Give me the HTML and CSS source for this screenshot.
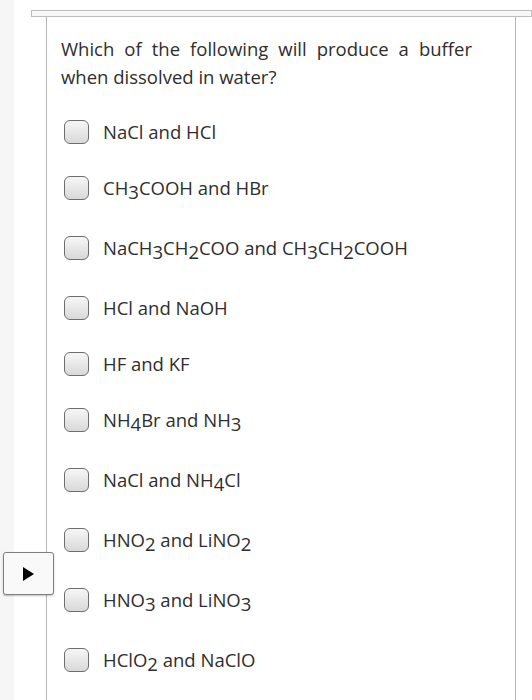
FILE: index.html
```html
<!DOCTYPE html>
<html lang="en">
<head>
<meta charset="utf-8">
<title>Buffer question</title>
<link rel="stylesheet" href="styles.css">
</head>
<body>
<div class="page">
  <aside class="rail"></aside>
  <main class="content">
    <div class="topbar"></div>
    <section class="panel">
      <p class="question">Which of the following will produce a buffer when dissolved in water?</p>
      <ul class="options">
        <li class="option"><input type="checkbox" class="box"><span class="label">NaCl and HCl</span></li>
        <li class="option"><input type="checkbox" class="box"><span class="label">CH<span class="sub">3</span>COOH and HBr</span></li>
        <li class="option"><input type="checkbox" class="box"><span class="label">NaCH<span class="sub">3</span>CH<span class="sub">2</span>COO and CH<span class="sub">3</span>CH<span class="sub">2</span>COOH</span></li>
        <li class="option"><input type="checkbox" class="box"><span class="label">HCl and NaOH</span></li>
        <li class="option"><input type="checkbox" class="box"><span class="label">HF and KF</span></li>
        <li class="option"><input type="checkbox" class="box"><span class="label">NH<span class="sub">4</span>Br and NH<span class="sub">3</span></span></li>
        <li class="option"><input type="checkbox" class="box"><span class="label">NaCl and NH<span class="sub">4</span>Cl</span></li>
        <li class="option"><input type="checkbox" class="box"><span class="label">HNO<span class="sub">2</span> and LiNO<span class="sub">2</span></span></li>
        <li class="option"><input type="checkbox" class="box"><span class="label">HNO<span class="sub">3</span> and LiNO<span class="sub">3</span></span></li>
        <li class="option"><input type="checkbox" class="box"><span class="label">HClO<span class="sub">2</span> and NaClO</span></li>
      </ul>
    </section>
  </main>
</div>
<button class="nav-btn" type="button" aria-label="Next">
  <svg width="11" height="14" viewBox="0 0 11 14"><polygon points="0,0 11,7 0,14" fill="#000"/></svg>
</button>
</body>
</html>
```

FILE: styles.css
```css
html, body {
  margin: 0;
  padding: 0;
  background: #ffffff;
  font-family: "Open Sans", "Liberation Sans", sans-serif;
  color: #2e2e2e;
}

.page {
  display: flex;
  height: 700px;
  overflow: hidden;
}

.rail {
  width: 14px;
  flex: none;
  background: #f6f6f6;
}

.content {
  flex: 1;
  display: flex;
  flex-direction: column;
}

.topbar {
  margin: 10px 0 0 17px;
  height: 5px;
  border: 1px solid #bdbdbd;
  border-right-color: #c8c8c8;
  background: #f7f7f7;
}

.panel {
  margin-left: 32px;
  width: 470px;
  flex: 1;
  border-left: 1px solid #b5b5b5;
  border-right: 1px solid #b5b5b5;
  padding: 18px 0 0 14px;
  box-sizing: border-box;
}

.question {
  margin: 0;
  width: 411px;
  font-size: 18.5px;
  line-height: 28px;
  text-align: justify;
}

.options {
  list-style: none;
  margin: 13px 0 0 0;
  padding: 0;
}

.option {
  display: flex;
  align-items: flex-start;
  padding: 16px 0;
  font-size: 18.5px;
  line-height: 24px;
}

.box {
  appearance: none;
  -webkit-appearance: none;
  margin: 0 0 0 3px;
  width: 25px;
  height: 24px;
  flex: none;
  box-sizing: border-box;
  border: 1.5px solid #6e6e6e;
  border-radius: 6px;
  background: linear-gradient(#f7f7f7, #d8d8d8);
}

.label {
  margin-left: 14px;
  white-space: nowrap;
}

.sub {
  font-size: 1em;
  vertical-align: -4px;
  line-height: 24px;
}

.nav-btn {
  position: absolute;
  left: 3px;
  top: 552px;
  width: 51px;
  height: 43px;
  padding: 0;
  border: 1px solid #7f7f7f;
  border-radius: 3px;
  background: #f9f9f9;
  box-shadow: 0 1px 2px rgba(0, 0, 0, 0.25);
  display: flex;
  align-items: center;
  justify-content: center;
}
```
